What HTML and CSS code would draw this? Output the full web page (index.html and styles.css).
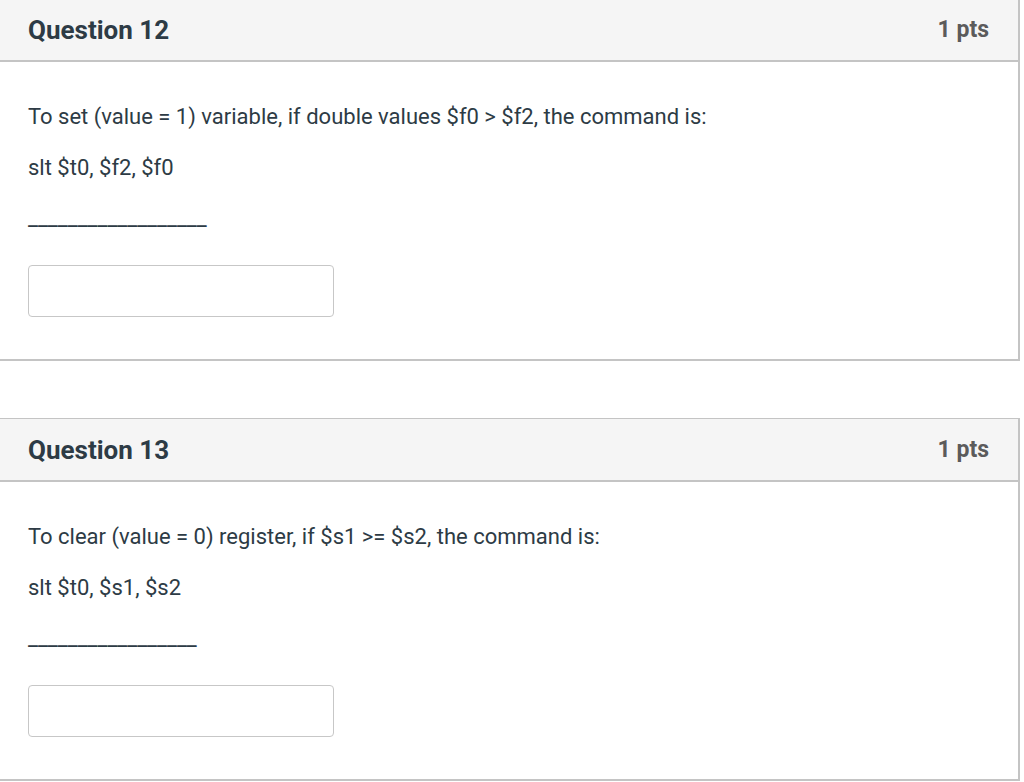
FILE: index.html
```html
<!DOCTYPE html>
<html>
<head>
<meta charset="utf-8">
<link rel="stylesheet" href="styles.css">
</head>
<body>
<div class="page">
  <div class="question">
    <div class="q-header">
      <span class="q-title">Question 12</span>
      <span class="q-pts">1 pts</span>
    </div>
    <div class="q-body">
      <p class="q-text">To set (value = 1) variable, if double values $f0 &gt; $f2, the command is:</p>
      <p class="q-text q-code">slt $t0, $f2, $f0</p>
      <p class="q-blank">__________________</p>
      <input class="q-input" type="text">
    </div>
  </div>
  <div class="question">
    <div class="q-header">
      <span class="q-title">Question 13</span>
      <span class="q-pts">1 pts</span>
    </div>
    <div class="q-body">
      <p class="q-text">To clear (value = 0) register, if $s1 &gt;= $s2, the command is:</p>
      <p class="q-text q-code">slt $t0, $s1, $s2</p>
      <p class="q-blank">_________________</p>
      <input class="q-input" type="text">
    </div>
  </div>
</div>
</body>
</html>
```

FILE: styles.css
```css
html, body {
  margin: 0;
  padding: 0;
  background: #fff;
}
body {
  font-family: Roboto, "Liberation Sans", sans-serif;
  color: #2d3b45;
  overflow: hidden;
}
.page {
  margin: -2px 0 0 -2px;
  width: 1022px;
  display: flex;
  flex-direction: column;
  gap: 57px;
}
.question {
  border-style: solid;
  border-color: #c4c4c4;
  border-width: 1px 2px 2px 1px;
  background: #fff;
}
.q-header {
  background: #f5f5f5;
  border-bottom: 2px solid #c4c4c4;
  height: 61px;
  display: flex;
  align-items: center;
  justify-content: space-between;
  padding: 0 29px 0 29px;
}
.q-title {
  font-size: 26px;
  font-weight: 700;
  color: #2d3b45;
}
.q-pts {
  font-size: 23px;
  font-weight: 700;
  color: #5b5b5b;
}
.q-body {
  padding: 41px 29px 42px;
}
.q-text {
  margin: 0 0 23px;
  font-size: 22px;
  line-height: 28px;
}
.q-code {
  margin-bottom: 22px;
}
.q-blank {
  margin: 0 0 33px;
  font-size: 22px;
  line-height: 28px;
}
.q-input {
  display: block;
  box-sizing: border-box;
  width: 306px;
  height: 52px;
  margin: 0;
  border: 1px solid #c7c7c7;
  border-radius: 4px;
  background: #fff;
}
```
